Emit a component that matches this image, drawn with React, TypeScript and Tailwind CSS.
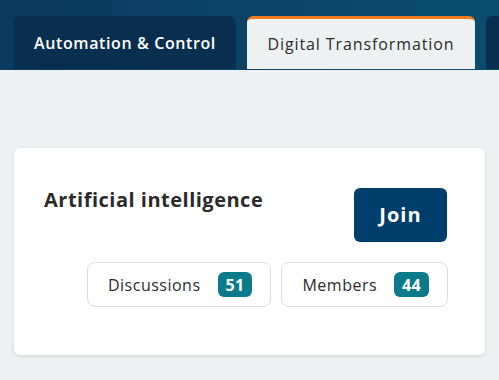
import React from 'react';

const font = { fontFamily: '"Open Sans", "Liberation Sans", sans-serif' };

function Stat({ label, count }: { label: string; count: number }) {
    return (
        <div className="flex items-center h-[45px] pl-[20px] pr-[18px] border border-[#dcdcdc] rounded-lg bg-white">
            <span className="text-[16px] font-medium tracking-[0.5px] text-[#2b2b2b]">{label}</span>
            <span className="ml-[17px] h-[25px] px-[8px] flex items-center justify-center rounded-md bg-[#0b7b8b] text-white text-[16px] font-bold tracking-[0.3px]">{count}</span>
        </div>
    );
}

export default function App() {
    return (
        <div className="w-[499px] h-[380px] overflow-hidden bg-[#eef1f2]" style={font}>
            {/* Tabs */}
            <div className="h-[70px] bg-gradient-to-r from-[#0b3960] to-[#0a4d70] flex items-end gap-[11px] pl-[14px] pb-px">
                <div className="w-[222px] h-[53px] shrink-0 rounded-t-md bg-[#0a2f4e] flex items-center justify-center text-white text-[16px] font-semibold tracking-[0.6px]">
                    Automation &amp; Control
                </div>
                <div className="w-[228px] h-[53px] shrink-0 rounded-t-md bg-[#eef1f2] border-t-[3px] border-[#f47b20] flex items-center justify-center text-[#2b2b2b] text-[16px] font-medium tracking-[0.9px]">
                    Digital Transformation
                </div>
                <div className="w-[120px] h-[53px] shrink-0 rounded-t-md bg-[#0a2f4e]" />
            </div>

            {/* Card */}
            <div className="mx-[14px] mt-[78px] h-[207px] bg-white rounded-md shadow-[0_1px_4px_rgba(0,0,0,0.12)] px-[30px] pt-[40px]">
                <div className="flex justify-between">
                    <h2 className="text-[20px] font-bold tracking-[0.5px] text-[#2b2b2b] leading-none mt-[2px]">Artificial intelligence</h2>
                    <button className="w-[93px] h-[54px] rounded-md bg-[#003f6b] text-white text-[20px] font-bold tracking-[1px] mr-[8px]">Join</button>
                </div>
                <div className="flex justify-end gap-[10px] mt-[20px] mr-[7px]">
                    <Stat label="Discussions" count={51} />
                    <Stat label="Members" count={44} />
                </div>
            </div>
        </div>
    );
}
